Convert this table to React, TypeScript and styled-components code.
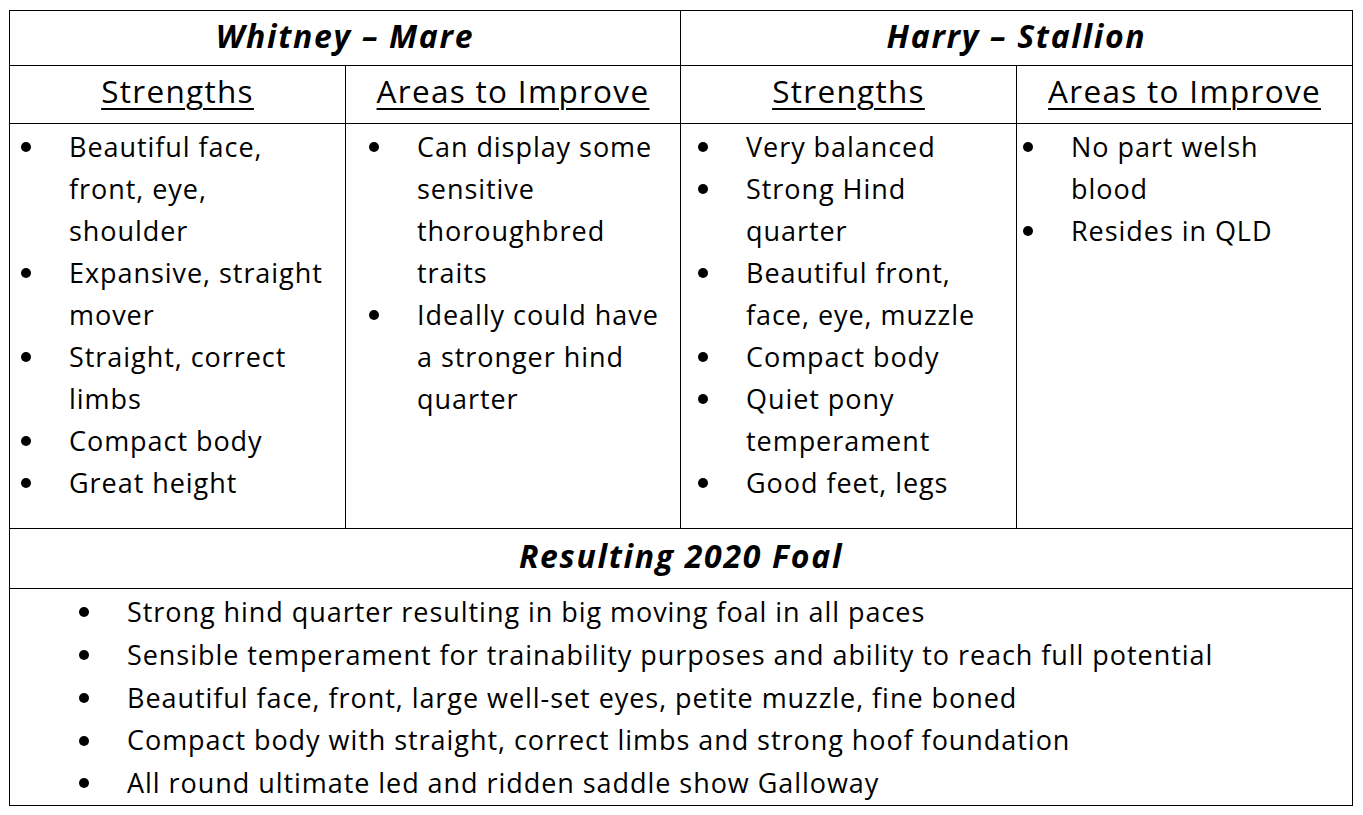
import React from 'react'
import styled, { createGlobalStyle } from 'styled-components'

const GlobalStyle = createGlobalStyle`
  html, body {
    margin: 0;
    padding: 0;
    background: #ffffff;
  }
  body {
    font-family: 'Open Sans', 'Liberation Sans', sans-serif;
    color: #000000;
  }
`

const FONT = `'Open Sans', 'Liberation Sans', sans-serif`

const parents = [
  {
    name: 'Whitney – Mare',
    strengths: [
      'Beautiful face,\nfront, eye,\nshoulder',
      'Expansive, straight\nmover',
      'Straight, correct\nlimbs',
      'Compact body',
      'Great height',
    ],
    improve: [
      'Can display some\nsensitive\nthoroughbred\ntraits',
      'Ideally could have\na stronger hind\nquarter',
    ],
    indents: [11, 23],
  },
  {
    name: 'Harry – Stallion',
    strengths: [
      'Very balanced',
      'Strong Hind\nquarter',
      'Beautiful front,\nface, eye, muzzle',
      'Compact body',
      'Quiet pony\ntemperament',
      'Good feet, legs',
    ],
    improve: ['No part welsh\nblood', 'Resides in QLD'],
    indents: [17, 6],
  },
]

const foal = [
  'Strong hind quarter resulting in big moving foal in all paces',
  'Sensible temperament for trainability purposes and ability to reach full potential',
  'Beautiful face, front, large well-set eyes, petite muzzle, fine boned',
  'Compact body with straight, correct limbs and strong hoof foundation',
  'All round ultimate led and ridden saddle show Galloway',
]

const BulletList = ({ items, lineHeight }: { items: string[]; lineHeight: number }) => (
  <List>
    {items.map((text) => (
      <Item key={text} $lh={lineHeight}>
        <Dot $lh={lineHeight}>
          <span />
        </Dot>
        <ItemText>
          {text.split('\n').map((line, i) => (
            <React.Fragment key={i}>
              {i > 0 && <br />}
              {line}
            </React.Fragment>
          ))}
        </ItemText>
      </Item>
    ))}
  </List>
)

export default function App() {
  return (
    <>
      <GlobalStyle />
      <Page>
        <Table>
          <colgroup>
            <col style={{ width: 336 }} />
            <col style={{ width: 335 }} />
            <col style={{ width: 336 }} />
            <col style={{ width: 336 }} />
          </colgroup>
          <tbody>
            <tr>
              {parents.map((p) => (
                <TitleCell key={p.name} colSpan={2} $h={50} $lift={4}>
                  {p.name}
                </TitleCell>
              ))}
            </tr>
            <tr>
              {parents.map((p) => (
                <React.Fragment key={p.name}>
                  <SubCell>Strengths</SubCell>
                  <SubCell>Areas to Improve</SubCell>
                </React.Fragment>
              ))}
            </tr>
            <tr>
              {parents.map((p) => (
                <React.Fragment key={p.name}>
                  <ListCell $indent={p.indents[0]} $h={402}>
                    <BulletList items={p.strengths} lineHeight={42} />
                  </ListCell>
                  <ListCell $indent={p.indents[1]} $h={402}>
                    <BulletList items={p.improve} lineHeight={42} />
                  </ListCell>
                </React.Fragment>
              ))}
            </tr>
            <tr>
              <TitleCell colSpan={4} $h={53} $lift={6}>
                Resulting 2020 Foal
              </TitleCell>
            </tr>
            <tr>
              <ListCell colSpan={4} $indent={69} $h={206}>
                <BulletList items={foal} lineHeight={42.75} />
              </ListCell>
            </tr>
          </tbody>
        </Table>
      </Page>
    </>
  )
}

const Page = styled.div`
  padding: 10px 0 0 9px;
`

const Table = styled.table`
  width: 1344px;
  border-collapse: collapse;
  table-layout: fixed;
  font-family: ${FONT};

  td {
    border: 1px solid #000000;
    padding: 0;
  }
`

const TitleCell = styled.td<{ $h: number; $lift: number }>`
  height: ${(p) => p.$h}px;
  padding-bottom: ${(p) => p.$lift}px !important;
  text-align: center;
  vertical-align: middle;
  font-size: 32px;
  font-weight: 700;
  font-style: italic;
  letter-spacing: 1.7px;
  line-height: 1;
`

const SubCell = styled.td`
  height: 49px;
  padding-bottom: 8px !important;
  text-align: center;
  vertical-align: middle;
  font-size: 31.5px;
  letter-spacing: 1.3px;
  line-height: 1;
  text-decoration: underline;
  text-decoration-thickness: 2px;
  text-underline-offset: 5px;
`

const ListCell = styled.td<{ $indent: number; $h: number }>`
  height: ${(p) => p.$h}px;
  vertical-align: top;
  padding: 2px 4px 0 ${(p) => p.$indent}px !important;
  font-size: 27px;
  letter-spacing: 0.95px;
`

const List = styled.div`
  display: flex;
  flex-direction: column;
`

const Item = styled.div<{ $lh: number }>`
  display: grid;
  grid-template-columns: 10px 1fr;
  column-gap: 38px;
  line-height: ${(p) => p.$lh}px;
`

const Dot = styled.div<{ $lh: number }>`
  height: ${(p) => p.$lh}px;
  display: flex;
  align-items: center;

  span {
    width: 10px;
    height: 10px;
    border-radius: 50%;
    background: #000000;
  }
`

const ItemText = styled.div`
  white-space: nowrap;
`
